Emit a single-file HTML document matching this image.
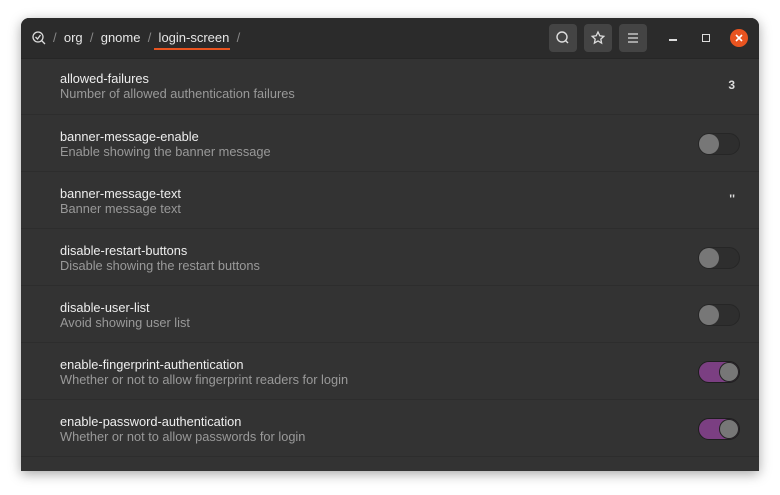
<!DOCTYPE html><html><head><style>
body{margin:0;width:780px;height:495px;background:#fff;font-family:"Liberation Sans",sans-serif;position:relative;overflow:hidden}
.win{position:absolute;left:21px;top:18px;width:738px;height:453px;background:#333;border-radius:8px 8px 0 0;box-shadow:0 3px 12px rgba(0,0,0,.35);overflow:hidden}
.hd{position:absolute;left:0;top:0;width:738px;height:40px;background:#2b2b2b;border-bottom:1px solid #262626}
.crumb{position:absolute;top:12px;font-size:13px;color:#e6e6e6}
.sl{color:#888}
.btn{position:absolute;top:6px;width:28px;height:28px;background:#444;border-radius:4px}
.row{position:absolute;left:0;width:738px;height:56px;border-bottom:1px solid #2d2d2d}
.t{position:absolute;left:39px;top:14px;font-size:12.8px;color:#eee}
.s{position:absolute;left:39px;top:29px;font-size:12.8px;color:#999}
.v{position:absolute;right:24px;top:20px;font-size:12px;color:#ddd;font-weight:bold}
.tg{position:absolute;left:677px;top:18px;width:40px;height:20px;border-radius:11px;background:#2e2e2e;border:1px solid #262626}
.tg i{position:absolute;left:0;top:0;width:20px;height:20px;border-radius:50%;background:#777}
.tg.on{background:#7b3f82;border-color:#1e1e1e}
.tg.on i{left:20px;border:1px solid #222;box-sizing:border-box}
</style></head><body><div class="win">
<div class="hd">
<svg style="position:absolute;left:10px;top:12px" width="16" height="16" viewBox="0 0 16 16" fill="none" stroke="#ddd" stroke-width="1.3"><circle cx="7" cy="7" r="5"/><path d="M10.5 10.5L14 14M4.5 7l2 2 3-4"/></svg>
<span class="crumb" style="left:32px"><span class="sl">/</span>&nbsp; org &nbsp;<span class="sl">/</span>&nbsp; gnome &nbsp;<span class="sl">/</span>&nbsp; login-screen &nbsp;<span class="sl">/</span></span>
<div style="position:absolute;left:133px;top:30px;width:76px;height:2px;background:#e95420"></div>
<div class="btn" style="left:528px"><svg width="28" height="28" viewBox="0 0 28 28" fill="none" stroke="#ddd" stroke-width="1.4"><circle cx="13" cy="13" r="5"/><path d="M16.5 16.5L19 19"/></svg></div>
<div class="btn" style="left:563px"><svg width="28" height="28" viewBox="0 0 28 28" fill="none" stroke="#ddd" stroke-width="1.3"><path d="M14 8l1.8 3.8 4 .5-3 2.8.8 4L14 17l-3.6 2.1.8-4-3-2.8 4-.5z"/></svg></div>
<div class="btn" style="left:598px"><svg width="28" height="28" viewBox="0 0 28 28" stroke="#ddd" stroke-width="1.3"><path d="M9 10h10M9 14h10M9 18h10"/></svg></div>
<div style="position:absolute;left:648px;top:21px;width:8px;height:1.5px;background:#ddd"></div>
<div style="position:absolute;left:681px;top:16px;width:6px;height:6px;border:1.3px solid #ddd"></div>
<div style="position:absolute;left:709px;top:11px;width:18px;height:18px;border-radius:50%;background:#e95420"><svg width="18" height="18" viewBox="0 0 18 18" stroke="#fff" stroke-width="1.6"><path d="M6 6l6 6M12 6l-6 6"/></svg></div>
</div>
<div class="row" style="top:40px"><div class="t" style="top:13px">allowed-failures</div><div class="s" style="top:28px">Number of allowed authentication failures</div><div class="v">3</div></div>
<div class="row" style="top:97px"><div class="t">banner-message-enable</div><div class="s">Enable showing the banner message</div><div class="tg"><i></i></div></div>
<div class="row" style="top:154px"><div class="t">banner-message-text</div><div class="s">Banner message text</div><div class="v">''</div></div>
<div class="row" style="top:211px"><div class="t">disable-restart-buttons</div><div class="s">Disable showing the restart buttons</div><div class="tg"><i></i></div></div>
<div class="row" style="top:268px"><div class="t">disable-user-list</div><div class="s">Avoid showing user list</div><div class="tg"><i></i></div></div>
<div class="row" style="top:325px"><div class="t">enable-fingerprint-authentication</div><div class="s">Whether or not to allow fingerprint readers for login</div><div class="tg on"><i></i></div></div>
<div class="row" style="top:382px"><div class="t">enable-password-authentication</div><div class="s">Whether or not to allow passwords for login</div><div class="tg on"><i></i></div></div>
</div></body></html>
